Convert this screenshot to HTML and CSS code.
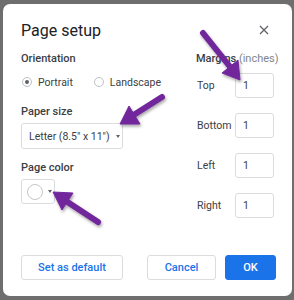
FILE: index.html
```html
<html lang="en">
<head>
    <meta charset="UTF-8">
    <meta name="viewport" content="width=device-width, initial-scale=1">
    <title>Page setup</title>
    <link rel="stylesheet" href="styles.css">
</head>
<body>
    <div class="dialog">
        <div class="header">
            <div class="title">Page setup</div>
            <svg class="close" width="10" height="10" viewBox="0 0 10 10">
                <path d="M1 1 L9 9 M9 1 L1 9" stroke="#5f6368" stroke-width="1.3" fill="none"/>
            </svg>
        </div>

        <div class="content">
            <div class="left">
                <div class="label">Orientation</div>
                <div class="radios">
                    <div class="radio"><span class="dot checked"></span>Portrait</div>
                    <div class="radio"><span class="dot"></span>Landscape</div>
                </div>

                <div class="label paper-label">Paper size</div>
                <div class="select">Letter (8.5" x 11")<span class="caret"></span></div>

                <div class="label color-label">Page color</div>
                <div class="swatch"><span class="circle"></span><span class="caret"></span></div>
            </div>

            <div class="right">
                <div class="label">Margins <span class="muted">(inches)</span></div>
                <div class="margin-row"><span>Top</span><div class="box">1</div></div>
                <div class="margin-row"><span>Bottom</span><div class="box">1</div></div>
                <div class="margin-row"><span>Left</span><div class="box">1</div></div>
                <div class="margin-row"><span>Right</span><div class="box">1</div></div>
            </div>
        </div>

        <div class="footer">
            <button class="btn default">Set as default</button>
            <div class="actions">
                <button class="btn">Cancel</button>
                <button class="btn primary">OK</button>
            </div>
        </div>
    </div>

    <svg class="arrows" width="294" height="300" viewBox="0 0 294 300">
        <defs>
            <filter id="shadow" x="-20%" y="-20%" width="140%" height="140%">
                <feDropShadow dx="1" dy="2" stdDeviation="1.5" flood-color="#000" flood-opacity="0.35"/>
            </filter>
        </defs>
        <g fill="#72279c" stroke="#72279c" filter="url(#shadow)">
            <line x1="203" y1="33" x2="231" y2="68" stroke-width="6" stroke-linecap="round"/>
            <polygon points="240,80 238,60 222,73" stroke-width="1" stroke-linejoin="round"/>

            <line x1="162" y1="97" x2="132" y2="116" stroke-width="6" stroke-linecap="round"/>
            <polygon points="120,124 140,124 129,106" stroke-width="1" stroke-linejoin="round"/>

            <line x1="98" y1="222" x2="66" y2="201" stroke-width="6" stroke-linecap="round"/>
            <polygon points="53,192 73,193 62,210" stroke-width="1" stroke-linejoin="round"/>
        </g>
    </svg>
</body>
</html>
```

FILE: styles.css
```css
html, body {
    margin: 0;
    padding: 0;
}

body {
    width: 294px;
    height: 300px;
    background-color: #6e6e6e;
    padding: 4px 2px 4px 3px;
    box-sizing: border-box;
    font-family: Roboto, "Liberation Sans", sans-serif;
    color: #3c4043;
    position: relative;
    overflow: hidden;
}

.dialog {
    background: #ffffff;
    border-radius: 7px;
    height: 292px;
    padding: 16px 18px 16px 18px;
    box-sizing: border-box;
    display: flex;
    flex-direction: column;
}

.header {
    display: flex;
    justify-content: space-between;
    align-items: center;
    height: 20px;
}

.title {
    font-size: 16px;
    color: #202124;
}

.close {
    margin-right: 5px;
}

.content {
    display: flex;
    justify-content: space-between;
    margin-top: 12px;
    white-space: nowrap;
}

.label {
    font-size: 11px;
    font-weight: 500;
    line-height: 14px;
    color: #3c4043;
}

.muted {
    font-weight: 400;
    color: #80868b;
}

.radios {
    display: flex;
    gap: 20px;
    margin-top: 8px;
    height: 16px;
    align-items: center;
}

.radio {
    display: flex;
    align-items: center;
    font-size: 10.5px;
}

.dot {
    width: 8px;
    height: 8px;
    border: 1px solid #bdc1c6;
    border-radius: 50%;
    margin: 0 6px 0 1px;
    position: relative;
}

.dot.checked::after {
    content: "";
    position: absolute;
    left: 2px;
    top: 2px;
    width: 4px;
    height: 4px;
    border-radius: 50%;
    background: #5f6368;
}

.paper-label {
    margin-top: 15px;
}

.select {
    margin-top: 4px;
    width: 102px;
    height: 26px;
    box-sizing: border-box;
    border: 1px solid #dadce0;
    border-radius: 3px;
    display: flex;
    align-items: center;
    padding-left: 7px;
    font-size: 10.5px;
}

.caret {
    width: 0;
    height: 0;
    border-left: 2.5px solid transparent;
    border-right: 2.5px solid transparent;
    border-top: 3px solid #5f6368;
    margin-left: 6px;
}

.color-label {
    margin-top: 12px;
}

.swatch {
    margin-top: 4px;
    width: 34px;
    height: 25px;
    box-sizing: border-box;
    border: 1px solid #dadce0;
    border-radius: 3px;
    display: flex;
    align-items: center;
    padding-left: 5px;
}

.swatch .circle {
    width: 14px;
    height: 14px;
    border: 1px solid #c4c7c5;
    border-radius: 50%;
}

.swatch .caret {
    margin-left: 5px;
}

.right {
    width: 78px;
}

.margin-row {
    display: flex;
    justify-content: space-between;
    align-items: center;
    height: 25px;
    margin-top: 15px;
    font-size: 10.5px;
    padding-left: 1px;
}

.right .label + .margin-row {
    margin-top: 7px;
}

.box {
    width: 39px;
    height: 25px;
    box-sizing: border-box;
    border: 1px solid #dadce0;
    border-radius: 3px;
    display: flex;
    align-items: center;
    padding-left: 7px;
    font-size: 10.5px;
}

.footer {
    margin-top: auto;
    display: flex;
    justify-content: space-between;
    margin-right: -2px;
}

.actions {
    display: flex;
    gap: 9px;
}

.btn {
    height: 25px;
    border: 1px solid #dadce0;
    border-radius: 3px;
    background: #ffffff;
    color: #1a73e8;
    font-family: Roboto, "Liberation Sans", sans-serif;
    font-size: 11px;
    font-weight: 500;
    padding: 0;
}

.default {
    width: 102px;
}

.actions .btn {
    width: 69px;
}

.actions .primary {
    width: 51px;
    background: #1a73e8;
    border-color: #1a73e8;
    color: #ffffff;
}

.arrows {
    position: absolute;
    left: 0;
    top: 0;
}
```
